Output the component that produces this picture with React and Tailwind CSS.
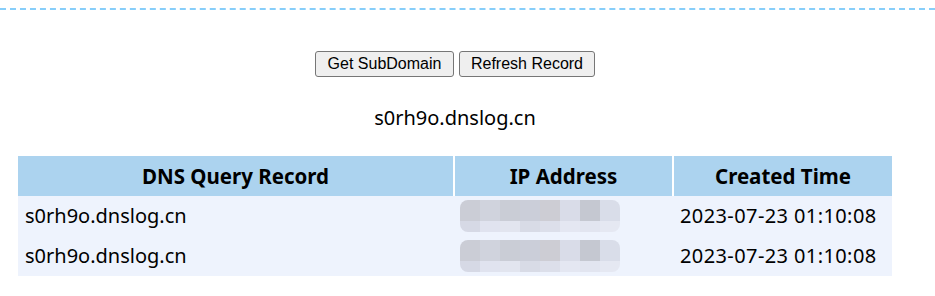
const rows = [
  { domain: "s0rh9o.dnslog.cn", time: "2023-07-23 01:10:08" },
  { domain: "s0rh9o.dnslog.cn", time: "2023-07-23 01:10:08" },
];

const TOP = ["#cbcdd6", "#d0d3dd", "#cacdd6", "#cbced9", "#cdcdd4", "#d9dce8", "#c5c8d1", "#d9dde9"];
const BOTTOM = ["#d6d9e5", "#e0e3ef", "#e2e5ef", "#d8dbe6", "#dcdfea", "#e4e7f2", "#e2e5f0", "#e5e8f2"];

function Blurred() {
  // pixelated mosaic over the hidden ip
  return (
    <div className="w-[160px] rounded-[8px] overflow-hidden flex flex-col">
      <div className="flex h-[21px]">
        {TOP.map((c, i) => (
          <div key={i} className="w-[20px]" style={{ background: c }} />
        ))}
      </div>
      <div className="flex h-[11px]">
        {BOTTOM.map((c, i) => (
          <div key={i} className="w-[20px]" style={{ background: c }} />
        ))}
      </div>
    </div>
  );
}

export default function App() {
  return (
    <div className="bg-white min-h-[296px] font-['Noto_Sans','Open_Sans',sans-serif] text-black">
      <div className="h-[10px] border-b-2 border-dashed border-[#87cefa]" />
      <div className="w-[910px]">
        <div className="flex justify-center gap-[5px] mt-[41px] font-['Liberation_Sans',Arial,sans-serif] text-[16px]">
          <button className="w-[139px] h-[26px] bg-[#efefef] border border-[#767676] rounded-[3px] leading-[18px]">
            Get SubDomain
          </button>
          <button className="w-[136px] h-[26px] bg-[#efefef] border border-[#767676] rounded-[3px] leading-[18px]">
            Refresh Record
          </button>
        </div>
        <p className="text-center text-[20px] leading-[26px] mt-[28px]">s0rh9o.dnslog.cn</p>
        <table className="ml-[18px] mt-[25px] w-[874px] border-collapse text-[20px]">
          <thead>
            <tr className="bg-[#acd3ef] h-[40px] text-[20.5px]">
              <th className="w-[436px] font-bold border-r-2 border-white">DNS Query Record</th>
              <th className="w-[219px] font-bold border-r-2 border-white">IP Address</th>
              <th className="font-bold">Created Time</th>
            </tr>
          </thead>
          <tbody className="bg-[#eef3fd]">
            {rows.map((r, i) => (
              <tr key={i} className="h-[40px]">
                <td className="pl-[7px] text-left">{r.domain}</td>
                <td className="pl-[6px]">
                  <Blurred />
                </td>
                <td className="pl-[7px] tracking-[0.4px]">{r.time}</td>
              </tr>
            ))}
          </tbody>
        </table>
      </div>
    </div>
  );
}
